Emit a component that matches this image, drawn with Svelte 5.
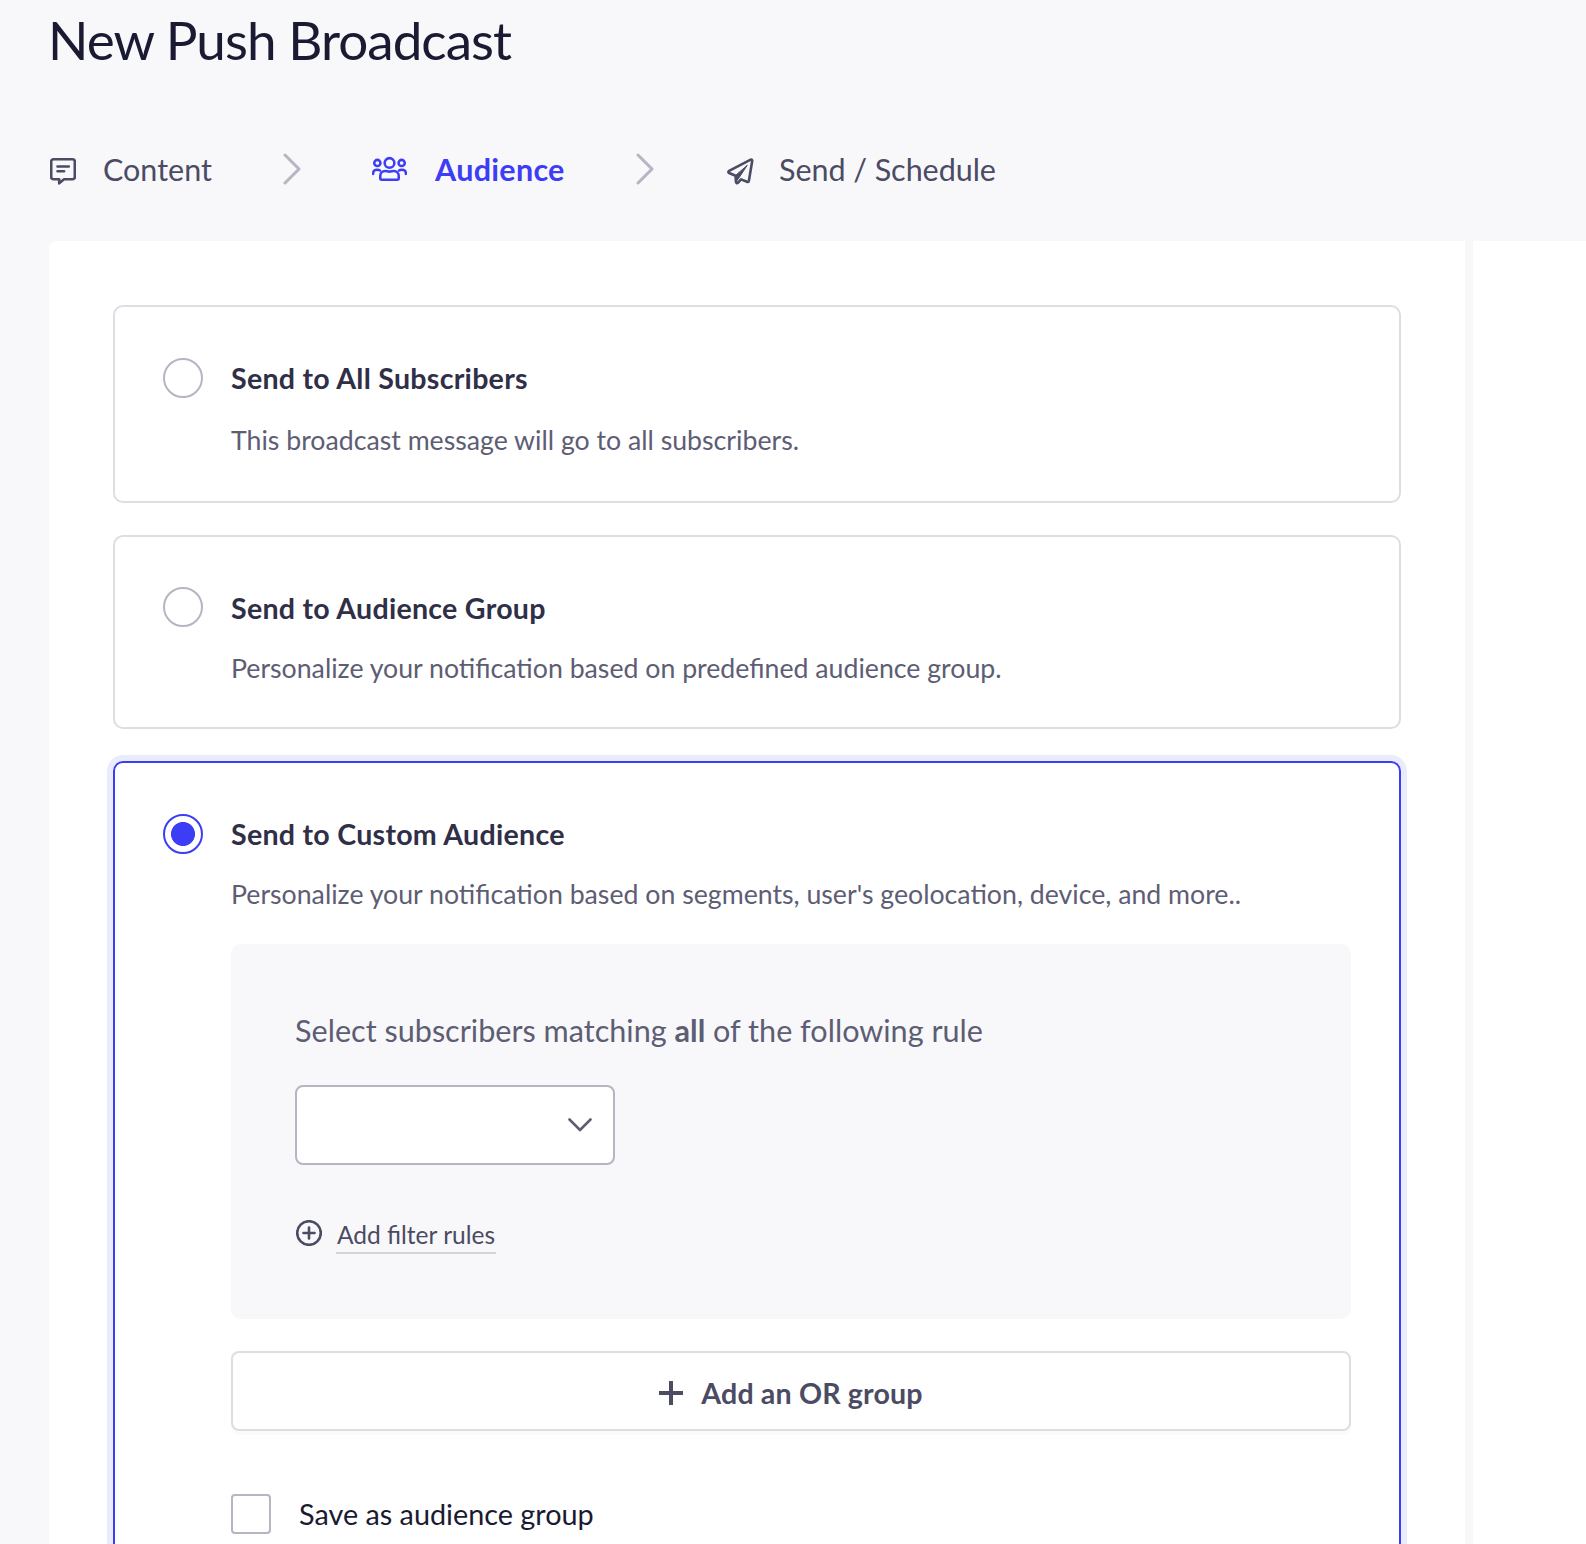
<script>
    let selected = "custom";
    let save_group = false;

    let options = [
        {
            id: "all",
            name: "Send to All Subscribers",
            description: "This broadcast message will go to all subscribers.",
        },
        {
            id: "group",
            name: "Send to Audience Group",
            description: "Personalize your notification based on predefined audience group.",
        },
        {
            id: "custom",
            name: "Send to Custom Audience",
            description:
                "Personalize your notification based on segments, user's geolocation, device, and more..",
        },
    ];
</script>

<main>
    <h1>New Push Broadcast</h1>

    <nav>
        <div class="step content">
            <svg width="26" height="27" viewBox="0 0 26 27">
                <path d="M3.5 1.3h19a2.3 2.3 0 0 1 2.3 2.3v15.4a2.3 2.3 0 0 1-2.3 2.3H14l-4.8 4v-4H3.5a2.3 2.3 0 0 1-2.3-2.3V3.6a2.3 2.3 0 0 1 2.3-2.3z" />
                <path d="M7.5 8.5h11.3M7.5 13.3h6.6" />
            </svg>
            <span>Content</span>
        </div>
        <svg class="chevron" width="18" height="32" viewBox="0 0 18 32">
            <path d="M2 2l14 14L2 30" />
        </svg>
        <div class="step audience current">
            <svg width="35" height="26" viewBox="0 0 36 26">
                <circle cx="18" cy="6.8" r="5" />
                <circle cx="5.5" cy="6.8" r="3.2" />
                <circle cx="30.5" cy="6.8" r="3.2" />
                <path d="M8.5 22.5V20a5 5 0 0 1 5-5c2 0 2.5.7 4.5.7s2.5-.7 4.5-.7a5 5 0 0 1 5 5v2.5A1.5 1.5 0 0 1 26 24H10a1.5 1.5 0 0 1-1.5-1.5z" />
                <path d="M1.2 18v-.5c0-2.5 2-3.7 4-3.7 1.3 0 2.3.2 3 .7M34.8 18v-.5c0-2.5-2-3.7-4-3.7-1.3 0-2.3.2-3 .7" />
            </svg>
            <span>Audience</span>
        </div>
        <svg class="chevron" width="18" height="32" viewBox="0 0 18 32">
            <path d="M2 2l14 14L2 30" />
        </svg>
        <div class="step send">
            <svg width="27" height="27" viewBox="0 0 27 27">
                <path d="M23.2 1.8L2.1 12.9c-1 .6-1 1.6 0 2.1l6.5 2.7.3 6c.1 1.5 1.2 2 2.2 1l2.9-3.3 6 2.4c1 .4 1.7 0 1.9-1L25.2 3c.1-1.2-.8-1.8-2-1.2z" />
                <path class="fold" d="M20 7.5L8.3 17.7l.6 6.3 3.6-5z" />
            </svg>
            <span>Send / Schedule</span>
        </div>
    </nav>

    <div class="columns">
        <section class="panel">
            {#each options as option}
                <div class="card {option.id}" class:selected={selected == option.id}>
                    <button
                        class="radio"
                        aria-label={option.name}
                        on:click={() => (selected = option.id)}
                    ></button>
                    <div class="body">
                        <h2>{option.name}</h2>
                        <p>{option.description}</p>

                        {#if option.id == "custom"}
                            <div class="rules">
                                <div class="match">
                                    Select subscribers matching <b>all</b> of the following rule
                                </div>
                                <button class="select" aria-label="Rule">
                                    <svg width="24" height="14" viewBox="0 0 24 14">
                                        <path d="M1.5 1.5L12 12 22.5 1.5" />
                                    </svg>
                                </button>
                                <div class="add-filter">
                                    <svg width="26" height="26" viewBox="0 0 26 26">
                                        <circle cx="13" cy="13" r="11.8" />
                                        <path d="M13 7.5v11M7.5 13h11" />
                                    </svg>
                                    <span>Add filter rules</span>
                                </div>
                            </div>
                            <button class="add-group">
                                <svg width="24" height="24" viewBox="0 0 24 24">
                                    <path d="M12 0v24M0 12h24" />
                                </svg>
                                <span>Add an OR group</span>
                            </button>
                            <label>
                                <input type="checkbox" bind:checked={save_group} />
                                <span>Save as audience group</span>
                            </label>
                        {/if}
                    </div>
                </div>
            {/each}
        </section>
        <aside></aside>
    </div>
</main>

<style>
    :global(body) {
        background-color: #f8f8fb;
        overflow: hidden;
    }

    main {
        height: 1544px;
        overflow: hidden;
        font-family: Lato, "Open Sans", sans-serif;
        white-space: nowrap;
    }

    h1 {
        margin: 0;
        padding: 5px 0 0 48px;
        height: 119px;
        font-size: 53px;
        font-weight: 400;
        letter-spacing: -0.95px;
        line-height: 70px;
        color: #1a1a33;
    }

    nav {
        display: flex;
        align-items: center;
        height: 90px;
        padding: 0 0 27px 50px;
        font-size: 30.5px;
        color: #4b4b63;
    }

    nav svg,
    .rules svg,
    .add-group svg {
        display: block;
        flex: none;
        fill: none;
        stroke: currentColor;
        stroke-width: 2.6;
        stroke-linejoin: round;
        stroke-linecap: round;
    }

    .step {
        display: flex;
        align-items: center;
        gap: 27px;
    }

    .step svg {
        margin-top: 4px;
    }

    .content {
        width: 233px;
    }

    .audience {
        width: 264px;
        margin-left: 71px;
    }

    .audience svg {
        margin-top: -1px;
        margin-right: 1px;
    }

    .send {
        gap: 25px;
        margin-left: 73px;
        letter-spacing: -0.05px;
    }

    .current {
        color: #3d3df5;
        font-weight: 700;
        letter-spacing: 0.3px;
    }

    nav .chevron {
        stroke: #b5b5c3;
        stroke-width: 3;
    }

    .step .fold {
        fill: currentColor;
        stroke-width: 1;
    }

    .columns {
        display: flex;
        gap: 8px;
        padding-left: 49px;
    }

    .panel {
        box-sizing: border-box;
        width: 1416px;
        height: 1400px;
        padding: 64px;
        border-radius: 8px 0 0 0;
        background-color: white;
        display: flex;
        flex-direction: column;
        gap: 32px;
    }

    aside {
        flex: 1;
        background-color: white;
    }

    .card {
        box-sizing: border-box;
        display: flex;
        flex: none;
        gap: 28px;
        height: 194px;
        padding: 51px 48px 0 48px;
        border: 2px solid #dddde4;
        border-radius: 10px;
    }

    .card.all {
        height: 198px;
    }

    .card.custom {
        height: 900px;
    }

    .card.selected {
        border-color: #3d3df5;
        box-shadow: 0 0 0 6px #ebebfe;
    }

    .radio {
        box-sizing: border-box;
        flex: none;
        width: 40px;
        height: 40px;
        padding: 0;
        border: 2px solid #b5b5c3;
        border-radius: 50%;
        background-color: white;
    }

    .group .radio {
        margin-top: -1px;
    }

    .selected .radio {
        border-color: #3d3df5;
        background: radial-gradient(circle, #3d3df5 11.6px, white 12.4px);
    }

    .body {
        flex: 1;
    }

    h2 {
        margin: 0;
        font-size: 28.6px;
        font-weight: 700;
        letter-spacing: 0.26px;
        line-height: 40px;
        color: #2f2f47;
    }

    p {
        margin: 20px 0 0 0;
        font-size: 26.7px;
        line-height: 40px;
        color: #5d5d74;
    }

    .all p {
        margin-top: 22px;
    }

    .rules {
        box-sizing: border-box;
        height: 375px;
        margin-top: 30px;
        padding: 64px;
        border-radius: 10px;
        background-color: #f8f8fb;
    }

    .match {
        padding-top: 1px;
        font-size: 30.6px;
        line-height: 44px;
        color: #5d5d74;
    }

    .select {
        box-sizing: border-box;
        display: flex;
        justify-content: flex-end;
        align-items: center;
        width: 320px;
        height: 80px;
        margin-top: 32px;
        padding: 0 21px;
        border: 2px solid #b5b5c3;
        border-radius: 8px;
        background-color: white;
        color: #5d5d74;
    }

    .add-filter {
        display: flex;
        align-items: center;
        gap: 14px;
        margin-top: 50px;
        padding-left: 1px;
        font-size: 24.5px;
        color: #4b4b63;
    }

    .add-filter svg {
        margin-bottom: 3px;
    }

    .add-filter span {
        border-bottom: 2px solid #d3d3dc;
        padding: 3px 1px 0 1px;
        line-height: 34px;
    }

    .add-group {
        display: flex;
        justify-content: center;
        align-items: center;
        gap: 18px;
        width: 100%;
        height: 80px;
        margin-top: 32px;
        padding-top: 4px;
        border: 2px solid #dddde4;
        border-radius: 8px;
        background-color: white;
        box-shadow: 0 4px 0 #fbfbfc;
        color: #4b4b63;
        font: inherit;
        font-size: 28.6px;
        font-weight: 700;
        letter-spacing: 0.15px;
    }

    .add-group svg {
        stroke-width: 4;
        stroke-linecap: butt;
    }

    label {
        display: flex;
        align-items: center;
        gap: 28px;
        margin-top: 63px;
        font-size: 28.8px;
        color: #1a1a33;
    }

    input {
        appearance: none;
        box-sizing: border-box;
        width: 40px;
        height: 40px;
        margin: 0;
        border: 2px solid #b5b5c3;
        border-radius: 4px;
        background-color: white;
    }
</style>
